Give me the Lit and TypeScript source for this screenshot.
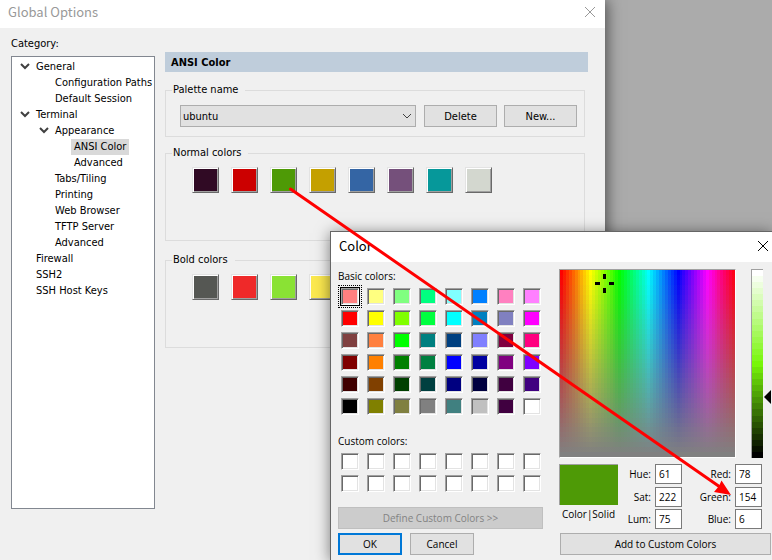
import { LitElement, html, svg, css } from "lit";
import { customElement } from "lit/decorators.js";
import { classMap } from "lit/directives/class-map.js";
import { styleMap } from "lit/directives/style-map.js";

interface TreeRow {
  text: string;
  level: number;
  open?: boolean;
  selected?: boolean;
}

const TREE: TreeRow[] = [
  { text: "General", level: 0, open: true },
  { text: "Configuration Paths", level: 1 },
  { text: "Default Session", level: 1 },
  { text: "Terminal", level: 0, open: true },
  { text: "Appearance", level: 1, open: true },
  { text: "ANSI Color", level: 2, selected: true },
  { text: "Advanced", level: 2 },
  { text: "Tabs/Tiling", level: 1 },
  { text: "Printing", level: 1 },
  { text: "Web Browser", level: 1 },
  { text: "TFTP Server", level: 1 },
  { text: "Advanced", level: 1 },
  { text: "Firewall", level: 0 },
  { text: "SSH2", level: 0 },
  { text: "SSH Host Keys", level: 0 },
];

const NORMAL = ["#300a24", "#cc0000", "#4e9a06", "#c4a000", "#3465a4", "#75507b", "#06989a", "#d3d7cf"];
const BOLD = ["#555753", "#ef2929", "#8ae234", "#fce94f", "#729fcf", "#ad7fa8", "#34e2e2", "#eeeeec"];

const BASIC = [
  "#ff8080", "#ffff80", "#80ff80", "#00ff80", "#80ffff", "#0080ff", "#ff80c0", "#ff80ff",
  "#ff0000", "#ffff00", "#80ff00", "#00ff40", "#00ffff", "#0080c0", "#8080c0", "#ff00ff",
  "#804040", "#ff8040", "#00ff00", "#008080", "#004080", "#8080ff", "#800040", "#ff0080",
  "#800000", "#ff8000", "#008000", "#008040", "#0000ff", "#0000a0", "#800080", "#8000ff",
  "#400000", "#804000", "#004000", "#004040", "#000080", "#000040", "#400040", "#400080",
  "#000000", "#808000", "#808040", "#808080", "#408080", "#c0c0c0", "#400040", "#ffffff",
];
const CUSTOM = Array<string>(16).fill("#ffffff");

/** A gradient of flat bands, one colour per band. */
function bands(angle: string, count: number, color: (i: number) => string): string {
  const stops = Array.from(
    { length: count },
    (_, i) => `${color(i)} ${((i * 100) / count).toFixed(3)}% ${(((i + 1) * 100) / count).toFixed(3)}%`
  );
  return `linear-gradient(${angle}, ${stops.join(", ")})`;
}

const SPECTRUM = [
  bands("180deg", 38, (i) => `rgba(128, 128, 128, ${(i / 37).toFixed(3)})`),
  bands("90deg", 60, (i) => `hsl(${i * 6}, 100%, 50%)`),
].join(", ");
const LUMINANCE = bands("180deg", 31, (i) => `hsl(92, 93%, ${(100 - (i * 100) / 30).toFixed(1)}%)`);

const controls = css`
  * {
    box-sizing: border-box;
  }
  button,
  input,
  select {
    font: inherit;
    color: #000;
    margin: 0;
    padding: 0;
    border-radius: 0;
    outline: none;
  }
  .push {
    background: #e1e1e1;
    border: 1px solid #adadad;
  }
  .close {
    width: 28px;
    height: 24px;
    background: none;
    border: 0;
    display: grid;
    place-items: center;
  }
  .titlebar {
    display: flex;
    align-items: center;
    justify-content: space-between;
    background: #fff;
  }
  .title {
    margin: 0;
    font: 13px/16px "Noto Sans CJK SC", "Noto Sans", sans-serif;
  }
`;

const closeIcon = svg`<svg width="12" height="12" viewBox="0 0 12 12" fill="none" stroke="currentColor">
  <path d="M1 1L11 11M11 1L1 11"/></svg>`;

@customElement("options-window")
class OptionsWindow extends LitElement {
  static styles = [
    controls,
    css`
      :host {
        display: flex;
        flex-direction: column;
        background: #f0f0f0;
        font: 11px/16px "DejaVu Sans Condensed", "DejaVu Sans", sans-serif;
        color: #000;
        box-shadow: 2px 0 14px rgba(0, 0, 0, 0.55);
      }
      .titlebar {
        height: 28px;
        padding: 0 1px 4px 8px;
      }
      .title,
      .close {
        color: #999;
      }
      .body {
        flex: 1;
        display: flex;
        gap: 10px;
        padding: 8px 17px 51px 11px;
      }
      .side {
        width: 144px;
        display: flex;
        flex-direction: column;
        gap: 4px;
      }
      .tree {
        flex: 1;
        margin: 0;
        padding: 2px 0;
        list-style: none;
        background: #fff;
        border: 1px solid #828790;
      }
      .row {
        display: flex;
        height: 16px;
        white-space: nowrap;
        padding-left: 8px;
      }
      .l1 {
        padding-left: 27px;
      }
      .l2 {
        padding-left: 46px;
      }
      .twist {
        width: 13px;
        height: 16px;
        flex: none;
      }
      .name {
        padding: 0 3px;
      }
      .selected .name {
        background: #d9d9d9;
      }
      .main {
        flex: 1;
        min-width: 0;
        padding-top: 16px;
      }
      .heading {
        margin: 0 0 10px;
        padding: 3px 6px 1px;
        font-size: 11px;
        line-height: 16px;
        font-weight: bold;
        background: #bfcddb;
      }
      fieldset {
        margin: 0 3px 0 0;
        padding: 0 7px;
        min-width: 0;
        border: 1px solid #dcdcdc;
      }
      legend {
        padding: 0 7px 0 1px;
        margin-left: -1px;
      }
      .palette {
        height: 55px;
        margin-bottom: 8px;
      }
      .line {
        display: flex;
        gap: 7px;
        padding: 7px 0 0 7px;
      }
      .drop {
        position: relative;
        flex: 1;
        display: flex;
        margin-right: 1px;
      }
      select {
        appearance: none;
        width: 100%;
        height: 22px;
        padding: 1px 2px 0;
        background: #e1e1e1;
        border: 1px solid #adadad;
      }
      .arrow {
        position: absolute;
        right: 4px;
        top: 8px;
        pointer-events: none;
      }
      .line .push {
        width: 73px;
        height: 22px;
        padding-top: 1px;
      }
      .colors {
        height: 96px;
        margin-bottom: 11px;
      }
      .swatches {
        display: flex;
        gap: 12px;
        padding: 6px 0 0 19px;
      }
      .swatch {
        width: 27px;
        height: 26px;
        flex: none;
        border: 1px solid;
        border-color: #e3e3e3 #696969 #696969 #e3e3e3;
        box-shadow: inset 1px 1px #fff, inset -1px -1px #a0a0a0;
      }
    `,
  ];

  private swatches(label: string, colors: string[]) {
    return html`<fieldset class="colors">
      <legend>${label}</legend>
      <div class="swatches">
        ${colors.map((c) => html`<button class="swatch" aria-label=${c} style=${styleMap({ background: c })}></button>`)}
      </div>
    </fieldset>`;
  }

  render() {
    return html`
      <header class="titlebar">
        <h1 class="title">Global Options</h1>
        <button class="close" aria-label="Close">${closeIcon}</button>
      </header>
      <div class="body">
        <div class="side">
          <span id="category">Category:</span>
          <ul class="tree" role="tree" aria-labelledby="category">
            ${TREE.map(
              (r) => html`<li
                role="treeitem"
                aria-level=${r.level + 1}
                class=${classMap({ row: true, ["l" + r.level]: true, selected: !!r.selected })}
              >
                <svg class="twist" viewBox="0 0 13 16" fill="none" stroke="#404040" stroke-width="2">
                  ${r.open ? svg`<path d="M1 5L5 9L9 5"/>` : ""}
                </svg>
                <span class="name">${r.text}</span>
              </li>`
            )}
          </ul>
        </div>
        <main class="main">
          <h2 class="heading">ANSI Color</h2>
          <fieldset class="palette">
            <legend>Palette name</legend>
            <div class="line">
              <div class="drop">
                <select aria-label="Palette name"><option>ubuntu</option></select>
                <svg class="arrow" width="10" height="7" viewBox="0 0 10 7" fill="none" stroke="#404040">
                  <path d="M1 1L5 5L9 1"/>
                </svg>
              </div>
              <button class="push">Delete</button>
              <button class="push">New...</button>
            </div>
          </fieldset>
          ${this.swatches("Normal colors", NORMAL)} ${this.swatches("Bold colors", BOLD)}
        </main>
      </div>
    `;
  }
}

@customElement("color-dialog")
class ColorDialog extends LitElement {
  static styles = [
    controls,
    css`
      :host {
        display: block;
        background: #f0f0f0;
        border: solid #666;
        border-width: 1px 0 0 1px;
        font: 10px/16px "Open Sans", "Noto Sans", sans-serif;
        color: #000;
        box-shadow: 0 2px 14px rgba(0, 0, 0, 0.5);
      }
      .titlebar {
        height: 30px;
        padding: 0 0 2px 8px;
      }
      .titlebar .close {
        width: 18px;
      }
      .body {
        display: flex;
        gap: 16px;
        padding: 6px 1px 6px 7px;
      }
      .left {
        width: 205px;
        flex: none;
        display: flex;
        flex-direction: column;
      }
      .label {
        margin: 0;
        font: inherit;
      }
      .cells {
        display: grid;
        grid-template-columns: repeat(8, 18px);
        gap: 5px 8px;
        padding: 4px 0 0 3px;
        margin-bottom: 18px;
      }
      .custom {
        margin-bottom: 15px;
      }
      .cell {
        height: 17px;
        border: 1px solid;
        border-color: #a0a0a0 #fff #fff #a0a0a0;
        box-shadow: inset 1px 1px #696969, inset -1px -1px #e3e3e3;
      }
      .cell.current {
        box-shadow: inset 1px 1px #696969, inset -1px -1px #e3e3e3, 0 0 0 1px #000;
        outline: 1px dotted #000;
        outline-offset: 2px;
      }
      .left .push,
      .add {
        height: 22px;
      }
      .define:disabled {
        color: #838383;
        background: #ccc;
        border-color: #bfbfbf;
      }
      .actions {
        display: flex;
        gap: 8px;
        margin-top: 4px;
      }
      .actions .push {
        width: 64px;
      }
      .actions .ok {
        border: 2px solid #0078d7;
      }
      .right {
        flex: 1;
        min-width: 0;
        display: flex;
        flex-direction: column;
        padding-top: 1px;
      }
      .pick {
        display: flex;
        margin-bottom: 6px;
      }
      .spectrum {
        position: relative;
        flex: 1;
        height: 189px;
        border: 1px solid;
        border-color: #a0a0a0 #fff #fff #a0a0a0;
      }
      .cross {
        position: absolute;
        left: 35px;
        top: 4px;
      }
      .lum {
        width: 12px;
        margin-left: 15px;
        border: solid #a0a0a0;
        border-width: 1px 0 0 1px;
      }
      .pointer {
        width: 7px;
        height: 14px;
        margin: 121px 0 0 1px;
      }
      .values {
        display: flex;
        height: 65px;
        margin: 0 9px 4px 0;
      }
      .preview {
        width: 59px;
        text-align: center;
      }
      .solid {
        height: 41px;
        border: solid #a0a0a0;
        border-width: 1px 0 0 1px;
        background: #4e9a06;
        margin-bottom: 1px;
      }
      .fields {
        display: grid;
        grid-template-columns: 1fr 27px;
        grid-auto-rows: 20px;
        align-content: space-between;
        align-items: center;
        gap: 2px 4px;
        width: 64px;
        text-align: right;
      }
      .fields + .fields {
        width: auto;
        flex: 1;
      }
      .fields input {
        width: 27px;
        height: 20px;
        padding-left: 3px;
        background: #fff;
        border: 1px solid #7a7a7a;
      }
      .add {
        margin-left: 1px;
      }
    `,
  ];

  private cell(color: string, current = false) {
    return html`<button
      class=${classMap({ cell: true, current })}
      aria-label=${color}
      style=${styleMap({ background: color })}
    ></button>`;
  }

  private fields(rows: [string, number][]) {
    return html`<div class="fields">
      ${rows.map(
        ([name, value]) => html`<label for=${name}>${name}:</label><input id=${name} .value=${String(value)} />`
      )}
    </div>`;
  }

  render() {
    return html`
      <header class="titlebar">
        <h2 class="title">Color</h2>
        <button class="close" aria-label="Close">${closeIcon}</button>
      </header>
      <div class="body">
        <div class="left">
          <h3 class="label">Basic colors:</h3>
          <div class="cells">${BASIC.map((c, i) => this.cell(c, i === 0))}</div>
          <h3 class="label">Custom colors:</h3>
          <div class="cells custom">${CUSTOM.map((c) => this.cell(c))}</div>
          <button class="push define" disabled>Define Custom Colors &gt;&gt;</button>
          <div class="actions">
            <button class="push ok">OK</button>
            <button class="push">Cancel</button>
          </div>
        </div>
        <div class="right">
          <div class="pick">
            <div class="spectrum" style=${styleMap({ backgroundImage: SPECTRUM })}>
              <svg class="cross" width="19" height="19" viewBox="0 0 19 19">
                <path d="M8 0h3v5H8zM8 14h3v5H8zM0 8h5v3H0zM14 8h5v3H14z"/>
              </svg>
            </div>
            <div class="lum" style=${styleMap({ backgroundImage: LUMINANCE })}></div>
            <svg class="pointer" viewBox="0 0 7 14"><path d="M7 0V14L0 7Z"/></svg>
          </div>
          <div class="values">
            <div class="preview">
              <div class="solid"></div>
              Color|Solid
            </div>
            ${this.fields([["Hue", 61], ["Sat", 222], ["Lum", 75]])}
            ${this.fields([["Red", 78], ["Green", 154], ["Blue", 6]])}
          </div>
          <button class="push add">Add to Custom Colors</button>
        </div>
      </div>
    `;
  }
}

@customElement("app-root")
class AppRoot extends LitElement {
  static styles = css`
    :host {
      display: block;
      position: relative;
      min-height: 100vh;
      background: #ababab;
      overflow: hidden;
    }
    options-window {
      min-height: 100vh;
      margin-right: 167px;
    }
    color-dialog {
      position: absolute;
      left: 330px;
      top: 231px;
      right: 0;
      bottom: 0;
    }
    .callout {
      position: absolute;
      left: 280px;
      top: 180px;
      pointer-events: none;
    }
  `;

  render() {
    return html`
      <options-window></options-window>
      <color-dialog></color-dialog>
      <svg class="callout" width="460" height="320" viewBox="280 180 460 320">
        <path d="M290.500 189L720 487" stroke="#f00" stroke-width="3" stroke-linecap="round"/>
        <path d="M731 495L721.500 480.500L719 486L714 492Z" fill="#f00"/>
      </svg>
    `;
  }
}
